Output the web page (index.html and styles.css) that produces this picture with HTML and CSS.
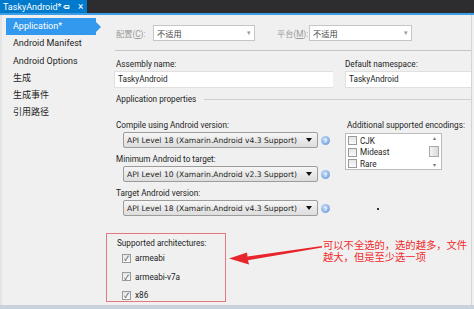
FILE: index.html
```html
<!DOCTYPE html>
<html lang="zh-CN">
<head>
    <meta charset="UTF-8">
    <title>TaskyAndroid</title>
    <link rel="stylesheet" href="styles.css">
</head>
<body>

    <!-- Document tab -->
    <div class="tabbar">
        <div class="tab">
            <span class="tab-title">TaskyAndroid*</span>
            <svg class="pin" width="8" height="6" viewBox="0 0 8 6">
                <path d="M0 3h2M2 1v4M2 1.5h4v3H2M3 4h3" stroke="#fff" stroke-width="1" fill="none"/>
            </svg>
            <span class="close">×</span>
        </div>
    </div>

    <div class="workspace">
        <!-- Left navigation -->
        <div class="nav">
            <div class="nav-item active">Application*</div>
            <div class="nav-item">Android Manifest</div>
            <div class="nav-item">Android Options</div>
            <div class="nav-item">生成</div>
            <div class="nav-item">生成事件</div>
            <div class="nav-item">引用路径</div>
        </div>

        <!-- Property page -->
        <div class="main">
            <div class="toolbar">
                <span class="tool-label">配置(<u>C</u>):</span>
                <div class="select select-config"><span>不适用</span><span class="caret">▾</span></div>
                <span class="tool-label tool-label-gap">平台(<u>M</u>):</span>
                <div class="select select-platform"><span>不适用</span><span class="caret">▾</span></div>
            </div>
            <div class="divider"></div>

            <div class="names">
                <div class="field field-assembly">
                    <div class="label">Assembly name:</div>
                    <div class="textbox">TaskyAndroid</div>
                </div>
                <div class="field field-namespace">
                    <div class="label">Default namespace:</div>
                    <div class="textbox">TaskyAndroid</div>
                </div>
            </div>

            <div class="group-title">
                <span>Application properties</span>
                <div class="group-line"></div>
            </div>

            <div class="props">
                <div class="versions">
                    <div class="label">Compile using Android version:</div>
                    <div class="combo-row">
                        <div class="combo"><span>API Level 18 (Xamarin.Android v4.3 Support)</span><span class="combo-arrow"></span></div>
                        <span class="help">?</span>
                    </div>
                    <div class="label label-next">Minimum Android to target:</div>
                    <div class="combo-row">
                        <div class="combo"><span>API Level 10 (Xamarin.Android v2.3 Support)</span><span class="combo-arrow"></span></div>
                        <span class="help">?</span>
                    </div>
                    <div class="label label-next">Target Android version:</div>
                    <div class="combo-row">
                        <div class="combo"><span>API Level 18 (Xamarin.Android v4.3 Support)</span><span class="combo-arrow"></span></div>
                        <span class="help">?</span>
                    </div>
                </div>

                <div class="encodings">
                    <div class="label">Additional supported encodings:</div>
                    <div class="listbox">
                        <div class="list-items">
                            <div class="list-item"><span class="checkbox"></span>CJK</div>
                            <div class="list-item"><span class="checkbox"></span>Mideast</div>
                            <div class="list-item"><span class="checkbox"></span>Rare</div>
                        </div>
                        <div class="scrollbar">
                            <span class="scroll-up">▴</span>
                            <span class="scroll-thumb"></span>
                            <span class="scroll-down">▾</span>
                        </div>
                    </div>
                    <div class="dot"></div>
                </div>
            </div>

            <div class="arch">
                <div class="label">Supported architectures:</div>
                <div class="arch-item"><span class="checkbox checked">✓</span>armeabi</div>
                <div class="arch-item"><span class="checkbox checked">✓</span>armeabi-v7a</div>
                <div class="arch-item"><span class="checkbox checked">✓</span>x86</div>
            </div>
        </div>
    </div>

    <div class="statusbar"></div>

    <!-- Red annotation over the page -->
    <svg class="note-arrow" width="100" height="24" viewBox="0 0 100 24">
        <polygon points="95,1 95,2.4 21,15.2 22,19.5 2,13.6 20,7.5 20.5,11.5" fill="#e8242c"/>
    </svg>
    <div class="note">可以不全选的，选的越多，文件<br>越大，但是至少选一项</div>

</body>
</html>
```

FILE: styles.css
```css
body {
    margin: 0;
    width: 474px;
    height: 309px;
    overflow: hidden;
    position: relative;
    display: flex;
    flex-direction: column;
    font-family: Roboto, "Noto Sans CJK SC", sans-serif;
    font-size: 8.2px;
    color: #1e1e1e;
    background-color: #f0f0f0;
}
.tabbar {
    height: 13px;
    background-color: #2d2d30;
    border-bottom: 2px solid #3c9ee5;
    display: flex;
}
.tab {
    width: 84px;
    padding-left: 3px;
    background-color: #007acc;
    color: #fff;
    display: flex;
    align-items: center;
    font-size: 9px;
}
.tab-title {
    width: 60px;
    white-space: nowrap;
}
.pin {
    margin-right: 7px;
}
.close {
    font-size: 10px;
    line-height: 10px;
}
.workspace {
    flex: 1;
    display: flex;
}
.statusbar {
    height: 4px;
    background-color: #c9d1dc;
}

/* navigation */
.nav {
    width: 104px;
    padding-top: 3px;
    border-left: 2px solid #e4e4e4;
}
.nav-item {
    height: 17.3px;
    line-height: 17.3px;
    padding-left: 11px;
    font-size: 9px;
    color: #1e1e1e;
}
.nav-item.active {
    position: relative;
    margin-left: 4px;
    width: 83px;
    padding-left: 7px;
    background-color: #3399ee;
    color: #fff;
}
.nav-item.active::after {
    content: "";
    position: absolute;
    right: -5px;
    top: 3.5px;
    border-left: 5px solid #3399ee;
    border-top: 5px solid transparent;
    border-bottom: 5px solid transparent;
}

/* main page */
.main {
    flex: 1;
    margin-right: 2px;
    padding: 10px 0 0 8px;
    border-right: 1px solid #d4d4d4;
}
.toolbar {
    height: 16px;
    display: flex;
    align-items: center;
}
.tool-label {
    color: #9a9a9a;
    width: 37px;
    padding-left: 2px;
}
.tool-label-gap {
    margin-left: 20px;
    width: 32px;
}
.select {
    height: 14px;
    background-color: #fff;
    border: 1px solid #c6c6c6;
    display: flex;
    align-items: center;
    justify-content: space-between;
    padding: 0 3px 0 3px;
    color: #444;
}
.select-config {
    width: 94px;
}
.select-platform {
    width: 95px;
}
.caret {
    color: #9a9a9a;
    font-size: 7px;
}
.divider {
    margin: 9px 0 0 1px;
    height: 1px;
    background-color: #c4c4c4;
}
.label {
    height: 12px;
    line-height: 12px;
    padding-left: 2px;
    white-space: nowrap;
}
.names {
    margin-top: 7px;
    display: flex;
    gap: 12px;
}
.field-assembly {
    width: 219px;
}
.field-namespace {
    flex: 1;
}
.field-namespace .label {
    padding-left: 0;
}
.textbox {
    margin-top: 1px;
    height: 15px;
    line-height: 15px;
    padding-left: 3px;
    background-color: #fff;
    border: 1px solid #e0e0e0;
    border-right: none;
}
.group-title {
    margin-top: 5px;
    height: 12px;
    display: flex;
    align-items: center;
    padding-left: 2px;
}
.group-line {
    flex: 1;
    height: 1px;
    margin-left: 8px;
    background-color: #cfcfcf;
}

/* android versions */
.props {
    margin-top: 14px;
    display: flex;
}
.versions {
    width: 231px;
}
.label-next {
    margin-top: 5px;
}
.combo-row {
    margin-top: 1px;
    display: flex;
    align-items: center;
    padding-left: 9px;
}
.combo {
    width: 190px;
    height: 14px;
    padding-left: 3px;
    border: 1px solid #9c9c9c;
    border-radius: 2px;
    background: linear-gradient(#f6f6f6, #dddddd);
    display: flex;
    align-items: center;
    justify-content: space-between;
    font-family: "DejaVu Sans", sans-serif;
    font-size: 7.6px;
}
.combo-arrow {
    margin-right: 5px;
    border-top: 4px solid #111;
    border-left: 3px solid transparent;
    border-right: 3px solid transparent;
}
.help {
    margin-left: 3px;
    width: 9px;
    height: 9px;
    border-radius: 50%;
    background: radial-gradient(circle at 40% 35%, #c9defa, #5a8fd6);
    color: #fff;
    font-size: 6px;
    line-height: 9px;
    text-align: center;
    font-weight: bold;
}

/* encodings list */
.encodings {
    position: relative;
    flex: 1;
}
.listbox {
    margin-top: 2px;
    width: 95px;
    height: 35px;
    background-color: #fff;
    border: 1px solid #bcbcbc;
    display: flex;
    justify-content: space-between;
}
.list-items {
    padding-top: 1px;
}
.list-item {
    height: 11.5px;
    display: flex;
    align-items: center;
    padding-left: 2px;
}
.checkbox {
    width: 7px;
    height: 7px;
    margin-right: 3px;
    border: 1px solid #9a9a9a;
    background: linear-gradient(#e6e6e6, #fafafa);
    display: inline-flex;
    align-items: center;
    justify-content: center;
    font-size: 7px;
    color: #333;
}
.scrollbar {
    width: 10px;
    margin-right: 2px;
    display: flex;
    flex-direction: column;
    align-items: center;
    justify-content: space-between;
    color: #777;
    font-size: 6px;
    line-height: 8px;
}
.scroll-thumb {
    width: 8px;
    height: 9px;
    border: 1px solid #aaa;
    background: linear-gradient(90deg, #f4f4f4, #dadada);
}
.dot {
    position: absolute;
    left: 32px;
    top: 89px;
    width: 2px;
    height: 2px;
    background-color: #333;
}

/* supported architectures */
.arch {
    margin: 17px 0 0 -8px;
    width: 110px;
    height: 64px;
    padding: 3px 0 0 8px;
    border: 1px solid #e27880;
}
.arch-item {
    height: 18.5px;
    display: flex;
    align-items: center;
    padding-left: 7px;
}
.arch-item .checkbox {
    margin-right: 4px;
}

/* annotation */
.note-arrow {
    position: absolute;
    left: 227px;
    top: 245px;
}
.note {
    position: absolute;
    left: 323px;
    top: 239px;
    font-family: "Noto Sans CJK SC", sans-serif;
    font-size: 10.3px;
    line-height: 12px;
    color: #f02a2a;
}
```
